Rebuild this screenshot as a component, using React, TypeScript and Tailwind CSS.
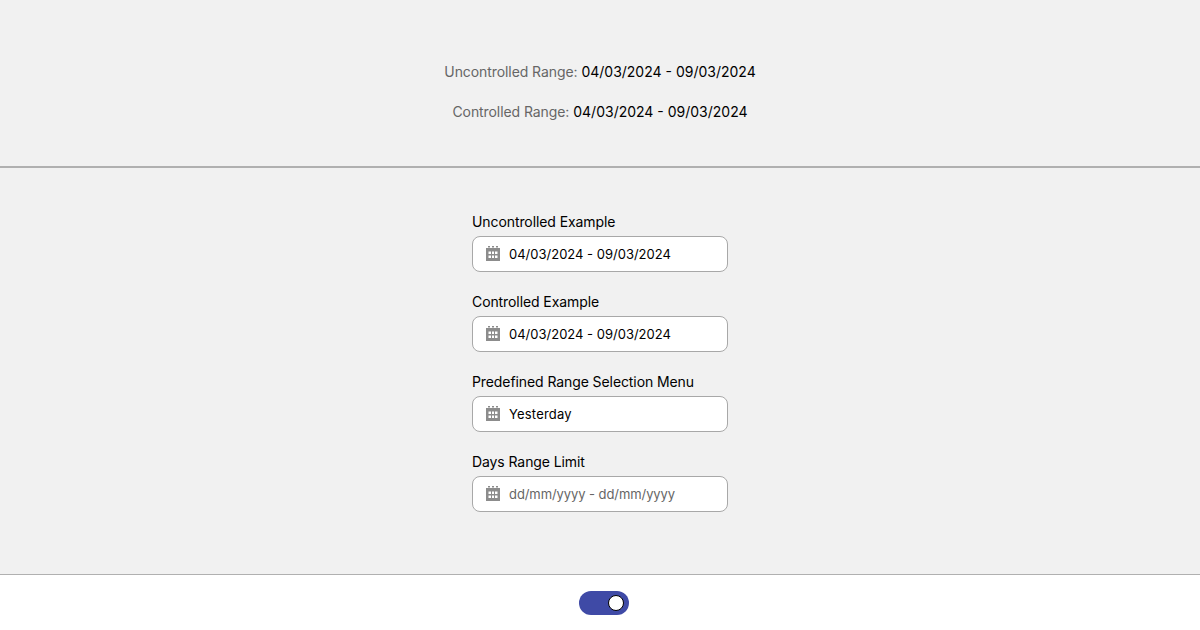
import { ReactNode } from 'react'

function CalendarIcon() {
  return (
    <svg width="16" height="18" viewBox="0 0 16 18" className="shrink-0 text-[#8c8c8c]" fill="currentColor">
      <path d="M3 1h2v1.500H3zM7 1h2v1.500H7zM11 1h2v1.500h-2z" />
      <path
        fillRule="evenodd"
        d="M1 3h14v13H1V3zm2.500 3.500v2.500h2.500V6.500H3.500zm3.500 0v2.500h2V6.500H7zm3 0v2.500h2.500V6.500H10zm-6.500 4v2.500h2.500v-2.500H3.500zm3.500 0v2.500h2v-2.500H7zm3 0v2.500h2.500v-2.500H10z"
      />
    </svg>
  )
}

function DateField({ label, value, placeholder, valueClass }: { label: string; value?: string; placeholder?: string; valueClass?: string }) {
  return (
    <div className="flex flex-col gap-1">
      <label className="text-[14px] leading-5 tracking-[-0.09px] text-black">{label}</label>
      <div className="flex h-9 items-center gap-2 rounded-lg border border-[#a8a8a8] bg-white px-3">
        <CalendarIcon />
        <span className={`pt-px text-[13px] ${value ? 'text-black' : 'tracking-[-0.08px] text-[#666666]'} ${valueClass ?? ''}`}>{value ?? placeholder}</span>
      </div>
    </div>
  )
}

function RangeLine({ label, children }: { label: string; children: ReactNode }) {
  return (
    <p className="text-center text-[14px] leading-5 text-[#666666]">
      <span className="tracking-[-0.08px]">{label}</span> <span className="text-black">{children}</span>
    </p>
  )
}

export default function App() {
  return (
    <div className="flex h-[630px] w-[1200px] flex-col bg-[#f1f1f1] font-['Inter',sans-serif]">
      {/* Values */}
      <div className="flex h-[168px] flex-col gap-5 border-b-2 border-[#b0b0b0] pt-[62px]">
        <RangeLine label="Uncontrolled Range:">04/03/2024 - 09/03/2024</RangeLine>
        <RangeLine label="Controlled Range:">04/03/2024 - 09/03/2024</RangeLine>
      </div>

      {/* Fields */}
      <div className="flex flex-1 flex-col items-center pt-11">
        <div className="flex w-64 flex-col gap-5">
          <DateField label="Uncontrolled Example" value="04/03/2024 - 09/03/2024" />
          <DateField label="Controlled Example" value="04/03/2024 - 09/03/2024" />
          <DateField label="Predefined Range Selection Menu" value="Yesterday" valueClass="tracking-[0.2px]" />
          <DateField label="Days Range Limit" placeholder="dd/mm/yyyy - dd/mm/yyyy" />
        </div>
      </div>

      {/* Theme switch */}
      <div className="flex h-14 items-center justify-center border-t border-[#b0b0b0] bg-white">
        <div className="ml-2 flex h-6 w-[50px] items-center justify-end rounded-full bg-[#3f4aa6] pr-[5px]">
          <div className="h-[16px] w-[16px] rounded-full border border-black bg-white" />
        </div>
      </div>
    </div>
  )
}
